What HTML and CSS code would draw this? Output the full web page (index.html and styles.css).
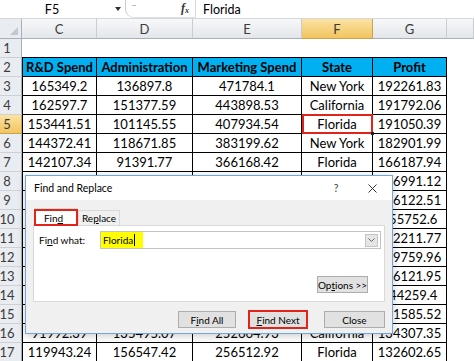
FILE: index.html
```html
<!DOCTYPE html>
<html lang="en">
<head>
  <meta charset="UTF-8" />
  <title>Find and Replace</title>
  <link rel="stylesheet" href="styles.css">
</head>
<body>
  <div class="window">
    <div class="formula-bar">
      <div class="name-box">F5</div>
      <span class="nb-arrow"></span>
      <div class="fx-box">
        <span class="grip"></span>
        <i class="fx">f<sub>x</sub></i>
      </div>
      <div class="formula">Florida</div>
    </div>

    <div class="sheet">
      <div class="corner"></div>
      <div class="ch">C</div><div class="ch">D</div><div class="ch">E</div><div class="ch sel">F</div><div class="ch">G</div><div class="ch"></div>

      <div class="rh">1</div><div class="top"></div><div class="top"></div><div class="top"></div><div class="top"></div><div class="top"></div><div></div>

      <div class="rh">2</div><div class="d l th">R&amp;D Spend</div><div class="d th">Administration</div><div class="d th">Marketing Spend</div><div class="d th">State</div><div class="d th">Profit</div><div></div>

      <div class="rh">3</div><div class="d l">165349.2</div><div class="d">136897.8</div><div class="d">471784.1</div><div class="d">New York</div><div class="d">192261.83</div><div></div>
      <div class="rh">4</div><div class="d l">162597.7</div><div class="d">151377.59</div><div class="d">443898.53</div><div class="d">California</div><div class="d">191792.06</div><div></div>
      <div class="rh sel">5</div><div class="d l">153441.51</div><div class="d">101145.55</div><div class="d">407934.54</div><div class="d active">Florida</div><div class="d">191050.39</div><div></div>
      <div class="rh">6</div><div class="d l">144372.41</div><div class="d">118671.85</div><div class="d">383199.62</div><div class="d">New York</div><div class="d">182901.99</div><div></div>
      <div class="rh">7</div><div class="d l">142107.34</div><div class="d">91391.77</div><div class="d">366168.42</div><div class="d">Florida</div><div class="d">166187.94</div><div></div>
      <div class="rh">8</div><div class="d l">131876.9</div><div class="d">99814.71</div><div class="d">362861.36</div><div class="d">New York</div><div class="d">156991.12</div><div></div>
      <div class="rh">9</div><div class="d l">134615.46</div><div class="d">147198.87</div><div class="d">127716.82</div><div class="d">California</div><div class="d">156122.51</div><div></div>
      <div class="rh">10</div><div class="d l">130298.13</div><div class="d">145530.06</div><div class="d">323876.68</div><div class="d">Florida</div><div class="d">155752.6</div><div></div>
      <div class="rh">11</div><div class="d l">120542.52</div><div class="d">148718.95</div><div class="d">311613.29</div><div class="d">New York</div><div class="d">152211.77</div><div></div>
      <div class="rh">12</div><div class="d l">123334.88</div><div class="d">108679.17</div><div class="d">304981.62</div><div class="d">California</div><div class="d">149759.96</div><div></div>
      <div class="rh">13</div><div class="d l">101913.08</div><div class="d">110594.11</div><div class="d">229160.95</div><div class="d">Florida</div><div class="d">146121.95</div><div></div>
      <div class="rh">14</div><div class="d l">100671.96</div><div class="d">91790.61</div><div class="d">249744.55</div><div class="d">California</div><div class="d">144259.4</div><div></div>
      <div class="rh">15</div><div class="d l">93863.75</div><div class="d">127320.38</div><div class="d">249839.44</div><div class="d">Florida</div><div class="d">141585.52</div><div></div>
      <div class="rh">16</div><div class="d l">91992.39</div><div class="d">135495.07</div><div class="d">252664.93</div><div class="d">California</div><div class="d">134307.35</div><div></div>
      <div class="rh">17</div><div class="d l">119943.24</div><div class="d">156547.42</div><div class="d">256512.92</div><div class="d">Florida</div><div class="d">132602.65</div><div></div>
    </div>

    <div class="dialog">
      <div class="dlg-title">
        <span class="caption">Find and Replace</span>
        <span class="dlg-help">?</span>
        <span class="dlg-close">
          <svg width="9" height="9" viewBox="0 0 9 9"><path d="M0.5 0.5L8.5 8.5M8.5 0.5L0.5 8.5" stroke="#333" stroke-width="1" fill="none"/></svg>
        </span>
      </div>
      <div class="dlg-body">
        <div class="tabs">
          <div class="tab active">Fin<u>d</u></div>
          <div class="tab">Re<u>p</u>lace</div>
        </div>
        <div class="panel">
          <div class="find-row">
            <label>Fi<u>n</u>d what:</label>
            <div class="find-input">
              <span class="hl">Florida<span class="caret"></span></span>
              <span class="dd">
                <svg width="7" height="4" viewBox="0 0 7 4"><path d="M0.5 0.5L3.5 3.5L6.5 0.5" stroke="#666" fill="none"/></svg>
              </span>
            </div>
          </div>
          <div class="btn options">Op<u>t</u>ions &gt;&gt;</div>
        </div>
        <div class="dlg-buttons">
          <div class="btn find-all">F<u>i</u>nd All</div>
          <div class="btn find-next"><u>F</u>ind Next</div>
          <div class="btn close">Close</div>
        </div>
      </div>
    </div>
  </div>
</body>
</html>
```

FILE: styles.css
```css
body {
  margin: 0;
  font-family: Lato, "Liberation Sans", sans-serif;
  background: #fff;
  color: #000;
}
.window {
  position: relative;
  width: 474px;
  height: 361px;
  overflow: hidden;
}

/* formula bar */
.formula-bar {
  display: flex;
  align-items: center;
  height: 19px;
  box-sizing: border-box;
  border-bottom: 1px solid #d4d7db;
  font-size: 12.5px;
}
.name-box {
  width: 104px;
  text-align: center;
}
.nb-arrow {
  margin-left: 11px;
  border-top: 4px solid #333;
  border-left: 3px solid transparent;
  border-right: 3px solid transparent;
}
.fx-box {
  align-self: stretch;
  margin-left: 4px;
  width: 71px;
  box-sizing: border-box;
  border-left: 1px solid #c9ced4;
  border-right: 1px solid #d4d7db;
  border-bottom: 1px solid #dde0e4;
  border-radius: 0 0 0 9px;
  display: flex;
  align-items: center;
  justify-content: space-between;
  padding: 0 6px 0 6px;
}
.grip {
  width: 4px;
  height: 1px;
  background: #b8bcc2;
  margin-top: -6px;
}
.fx {
  font-family: "Liberation Serif", serif;
  font-weight: bold;
  font-size: 12px;
  color: #333;
}
.fx sub {
  font-size: 8px;
  vertical-align: -1px;
}
.formula {
  padding-left: 7px;
}

/* grid */
.sheet {
  display: grid;
  grid-template-columns: 22px 75px 96px 109px 71px 74px 1fr;
  grid-template-rows: 20px;
  grid-auto-rows: 19px;
  font-size: 13px;
}
.sheet > div {
  box-sizing: border-box;
  display: flex;
  align-items: center;
  justify-content: center;
  white-space: nowrap;
}
.corner {
  position: relative;
  background: #e9ecf0;
  border-right: 1px solid #a9afb6;
  border-bottom: 1px solid #a9afb6;
}
.corner::after {
  content: "";
  position: absolute;
  right: 3px;
  bottom: 3px;
  border-left: 8px solid transparent;
  border-bottom: 8px solid #c3c8ce;
}
.ch {
  background: linear-gradient(#f7f8fa, #e3e6ea);
  border-right: 1px solid #c9cdd2;
  border-bottom: 1px solid #a9afb6;
  color: #3b3b3b;
}
.rh {
  background: #e9ecf0;
  border-right: 1px solid #a9afb6;
  border-bottom: 1px solid #cdd1d6;
  color: #3b3b3b;
  padding-right: 7px;
}
.ch.sel,
.rh.sel {
  background: linear-gradient(#fbe3a3, #f2c45f);
  border-color: #c9a24f;
}
.top {
  border-bottom: 1px solid #000;
}
.d {
  background: #fff;
  border-right: 1px solid #000;
  border-bottom: 1px solid #000;
}
.d.l {
  border-left: 1px solid #000;
}
.th {
  background: #00b0f0 !important;
  font-weight: bold;
}
.d.active {
  position: relative;
}
.d.active::after {
  content: "";
  position: absolute;
  left: 0;
  top: -1px;
  right: -1px;
  bottom: -1px;
  border: 2px solid #e2231a;
}
.d.active::before {
  content: "";
  position: absolute;
  right: -2px;
  bottom: -2px;
  width: 3px;
  height: 3px;
  background: #222;
  z-index: 1;
}

/* dialog */
.dialog {
  position: absolute;
  left: 25px;
  top: 175px;
  width: 368px;
  height: 159px;
  box-sizing: border-box;
  border: 1px solid #6fa6dd;
  background: #f0f0f0;
  box-shadow: 0 2px 8px rgba(0, 0, 0, 0.2);
  display: flex;
  flex-direction: column;
  font-size: 10px;
}
.dlg-title {
  height: 24px;
  background: #fff;
  display: flex;
  align-items: center;
  padding-left: 8px;
  padding-right: 2px;
  font-size: 10.5px;
}
.caption {
  flex: 1;
}
.dlg-help,
.dlg-close {
  width: 36px;
  display: flex;
  justify-content: center;
  color: #444;
}
.dlg-body {
  flex: 1;
  padding: 8px 7px 0 7px;
  display: flex;
  flex-direction: column;
}
.tabs {
  display: flex;
  align-items: flex-end;
  height: 18px;
  margin-left: 1px;
  position: relative;
  z-index: 1;
}
.tab {
  box-sizing: border-box;
  height: 15px;
  margin-bottom: 1px;
  width: 42px;
  border: 1px solid #d9d9d9;
  border-bottom: none;
  background: #f0f0f0;
  display: flex;
  align-items: center;
  justify-content: center;
}
.tab.active {
  position: relative;
  width: 44px;
  height: 18px;
  margin-bottom: 0;
  background: #fff;
  padding-right: 5px;
}
.tab.active::after {
  content: "";
  position: absolute;
  inset: 0 -1px 0 -1px;
  border: 2px solid #e2231a;
}
.panel {
  margin-top: -1px;
  height: 77px;
  box-sizing: border-box;
  background: #fff;
  border: 1px solid #d9d9d9;
  display: flex;
  flex-direction: column;
}
.find-row {
  display: flex;
  align-items: center;
  margin-top: 5px;
}
.find-row label {
  width: 66px;
  box-sizing: border-box;
  padding-left: 5px;
}
.find-input {
  width: 281px;
  height: 18px;
  box-sizing: border-box;
  border: 1px solid #c3c3c3;
  display: flex;
  align-items: stretch;
}
.hl {
  display: flex;
  align-items: center;
  background: #ffff00;
  padding: 0 8px 0 2px;
}
.caret {
  width: 1px;
  height: 12px;
  background: #000;
  margin-left: 1px;
}
.dd {
  margin-left: auto;
  margin-right: 2px;
  align-self: center;
  width: 13px;
  height: 13px;
  box-sizing: border-box;
  background: #e6e6e6;
  border: 1px solid #c4c4c4;
  display: flex;
  align-items: center;
  justify-content: center;
}
.btn {
  box-sizing: border-box;
  height: 17px;
  background: #e1e1e1;
  border: 1px solid #adadad;
  display: flex;
  align-items: center;
  justify-content: center;
  white-space: nowrap;
}
.options {
  width: 51px;
  align-self: flex-end;
  margin: auto 16px 8px 0;
}
.dlg-buttons {
  display: flex;
  justify-content: flex-end;
  margin-top: 9px;
}
.find-all {
  width: 58px;
  margin-right: 13px;
}
.find-next {
  position: relative;
  width: 58px;
  margin-right: 17px;
}
.find-next::after {
  content: "";
  position: absolute;
  inset: -2px;
  border: 2px solid #e2231a;
}
.close {
  width: 61px;
}
```
